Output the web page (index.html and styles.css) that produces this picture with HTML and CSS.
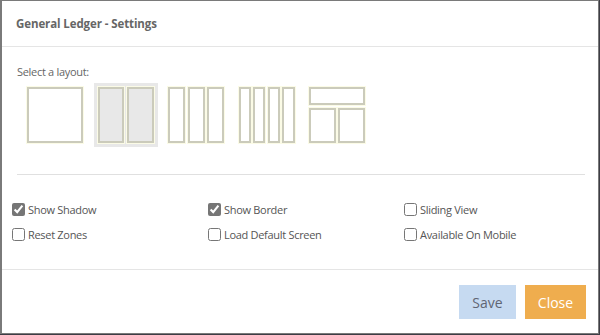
FILE: index.html
```html
<!DOCTYPE html>
<html>
<head>
<meta charset="utf-8">
<link rel="stylesheet" href="styles.css">
</head>
<body>
<div class="modal">
  <div class="header"><span class="title">General Ledger - Settings</span></div>
  <div class="content">
    <div class="label">Select a layout:</div>
    <div class="layouts">
      <div class="opt"><div class="cols"><i></i></div></div>
      <div class="opt selected"><div class="cols"><i></i><i></i></div></div>
      <div class="opt"><div class="cols"><i></i><i></i><i></i></div></div>
      <div class="opt"><div class="cols"><i></i><i></i><i></i><i></i></div></div>
      <div class="opt"><div class="mixed"><i class="wide"></i><i></i><i></i></div></div>
    </div>
    <div class="divider"></div>
    <div class="checks">
      <label class="check"><input type="checkbox" checked><span>Show Shadow</span></label>
      <label class="check"><input type="checkbox" checked><span>Show Border</span></label>
      <label class="check"><input type="checkbox"><span>Sliding View</span></label>
      <label class="check"><input type="checkbox"><span>Reset Zones</span></label>
      <label class="check"><input type="checkbox"><span>Load Default Screen</span></label>
      <label class="check"><input type="checkbox"><span>Available On Mobile</span></label>
    </div>
  </div>
  <div class="footer">
    <button class="btn save">Save</button>
    <button class="btn close">Close</button>
  </div>
</div>
</body>
</html>
```

FILE: styles.css
```css
* { box-sizing: border-box; }
html, body { margin: 0; padding: 0; }
body {
  background: #3d3d45;
  width: 600px;
  height: 335px;
  overflow: hidden;
  font-family: "Open Sans", "Noto Sans", sans-serif;
}
.modal {
  width: 599px;
  height: 334px;
  background: #fff;
  border: 1px solid #7a7a7a;
  border-left-width: 2px;
  display: flex;
  flex-direction: column;
}
.header {
  height: 46px;
  border-bottom: 1px solid #e5e5e5;
  padding-left: 14px;
  display: flex;
  align-items: center;
}
.title {
  font-size: 11.5px;
  font-weight: 700;
  color: #666;
  letter-spacing: -0.1px;
}
.content {
  flex: 1;
  padding: 17px 13px 0 15px;
}
.label {
  font-size: 11px;
  letter-spacing: -0.3px;
  line-height: 16px;
  color: #666;
}
.layouts {
  display: flex;
  gap: 6.5px;
  margin: 3px 0 0 6px;
}
.opt {
  width: 64px;
  height: 64px;
  padding: 4px;
}
.opt.selected { background: #e8e8e8; }
.opt i {
  display: block;
  border: 2px solid #cbcbbb;
  outline: 1px solid #fbfbe6;
}
.cols {
  display: flex;
  gap: 2.5px;
  height: 56px;
}
.cols i { flex: 1; }
.mixed {
  display: grid;
  grid-template-columns: 1fr 1fr;
  grid-template-rows: 18px 1fr;
  column-gap: 2px;
  row-gap: 3px;
  height: 56px;
}
.mixed .wide { grid-column: 1 / 3; }
.divider {
  height: 1px;
  background: #e0e0e0;
  margin-top: 27px;
}
.checks {
  display: grid;
  grid-template-columns: 196px 196px 196px;
  margin: 22px 0 0 -5px;
}
.check {
  display: flex;
  align-items: center;
  height: 25px;
  font-size: 11px;
  letter-spacing: -0.3px;
  color: #555;
}
.check input {
  margin: 0 3px 0 0;
  width: 13px;
  height: 13px;
  accent-color: #767676;
}
.footer {
  height: 64px;
  border-top: 1px solid #e5e5e5;
  display: flex;
  justify-content: flex-end;
  align-items: flex-start;
  gap: 9px;
  padding: 15px 12px 0 0;
}
.btn {
  height: 34px;
  border: none;
  font-family: "Open Sans", "Noto Sans", sans-serif;
  font-size: 14px;
  padding: 0;
}
.save { width: 57px; background: #c6daf1; color: #5f6573; }
.close { width: 61px; background: #efad4e; color: #fff; }
```
